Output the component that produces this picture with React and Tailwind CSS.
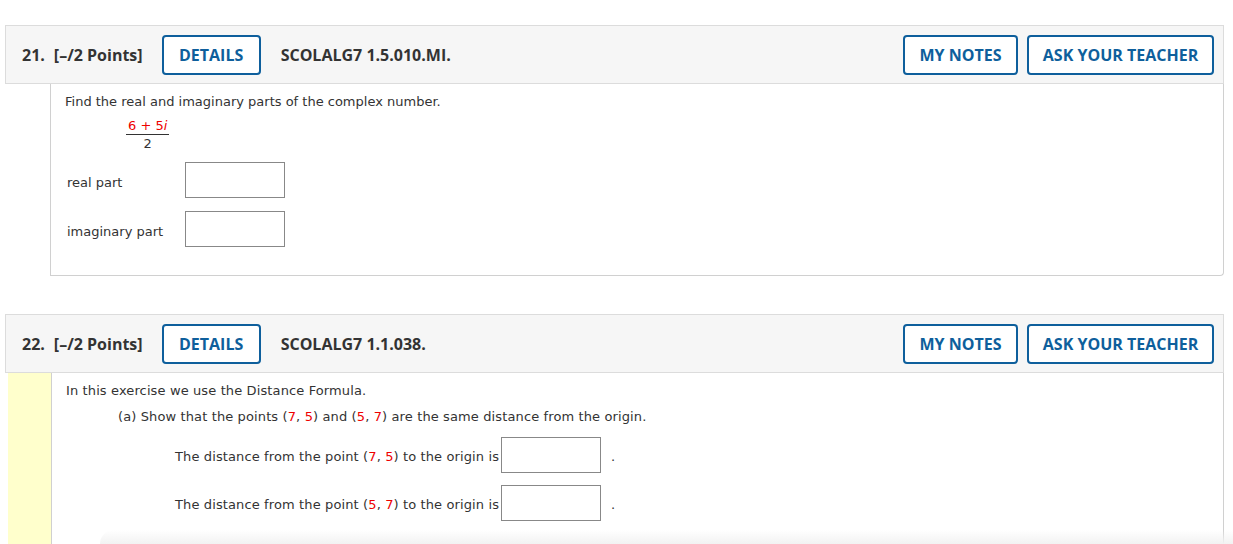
import React from 'react';

const head = "font-['Open_Sans',sans-serif]";
const body = "font-['DejaVu_Sans','Verdana',sans-serif]";

const OutlineButton = ({ children, className = '' }) => (
    <button
        className={`h-[40px] rounded-[4px] border-2 border-[#0e5f9c] bg-white text-[16px] font-bold text-[#0e5f9c] ${className}`}
    >
        {children}
    </button>
);

const QuestionHeader = ({ num, code }) => (
    <div className={`flex h-[59px] items-center border border-[#dcdcdc] bg-[#f6f6f6] pl-[16px] pr-[9px] ${head}`}>
        <span className="text-[16px] font-bold text-[#333]">{num}.</span>
        <span className="ml-[9px] text-[16px] font-bold text-[#333]">[–/2 Points]</span>
        <OutlineButton className="ml-[19px] w-[99px]">DETAILS</OutlineButton>
        <span className="ml-[20px] text-[16px] font-bold text-[#333]">{code}</span>
        <div className="ml-auto flex gap-[9px]">
            <OutlineButton className="w-[115px]">MY NOTES</OutlineButton>
            <OutlineButton className="w-[187px]">ASK YOUR TEACHER</OutlineButton>
        </div>
    </div>
);

const Blank = () => <span className="inline-block h-[36px] w-[100px] border border-[#888] bg-white align-middle" />;

const Red = ({ children }) => <span className="text-[#e00]">{children}</span>;

export default function App() {
    return (
        <div className={`relative h-[544px] overflow-hidden bg-white pt-[25px] pl-[5px] pr-[9px] text-[13px] text-[#333] ${body}`}>
            {/* question 21 */}
            <QuestionHeader num="21" code="SCOLALG7 1.5.010.MI." />
            <div className="ml-[45px] h-[192px] rounded-br-[4px] border-x border-b border-t-0 border-[#d0d0d0] pl-[14px] pt-[10px]">
                <p className="leading-[16px]">Find the real and imaginary parts of the complex number.</p>
                <div className="ml-[61px] mt-[8px] inline-flex flex-col items-center text-[13px] leading-[15px]">
                    <span className="border-b border-[#333] px-[2px] pb-[1px] text-[#e00]">
                        6 + 5<i>i</i>
                    </span>
                    <span className="pt-[1px]">2</span>
                </div>
                <div className="mt-[11px] flex items-center">
                    <span className="w-[120px] pl-[2px] pt-[5px]">real part</span>
                    <Blank />
                </div>
                <div className="mt-[13px] flex items-center">
                    <span className="w-[120px] pl-[2px] pt-[5px]">imaginary part</span>
                    <Blank />
                </div>
            </div>

            {/* question 22 */}
            <div className="mt-[38px]">
                <QuestionHeader num="22" code="SCOLALG7 1.1.038." />
                <div className="flex h-[200px]">
                    <div className="ml-[3px] w-[43px] bg-[#ffffcc]" />
                    <div className="flex-1 border-l border-r border-[#d0d0d0] pl-[14px] pt-[10px] tracking-[0.12px]">
                        <p className="leading-[16px]">In this exercise we use the Distance Formula.</p>
                        <p className="mt-[10px] ml-[52px] leading-[16px]">
                            (a) Show that the points (<Red>7</Red>, <Red>5</Red>) and (<Red>5</Red>, <Red>7</Red>) are the same distance from the origin.
                        </p>
                        <div className="mt-[12px] ml-[109px] flex items-center">
                            <span className="pt-[4px]">
                                The distance from the point (<Red>7</Red>, <Red>5</Red>) to the origin is
                            </span>
                            <span className="ml-[2px]"><Blank /></span>
                            <span className="ml-[10px] pt-[4px]">.</span>
                        </div>
                        <div className="mt-[12px] ml-[109px] flex items-center">
                            <span className="pt-[4px]">
                                The distance from the point (<Red>5</Red>, <Red>7</Red>) to the origin is
                            </span>
                            <span className="ml-[2px]"><Blank /></span>
                            <span className="ml-[10px] pt-[4px]">.</span>
                        </div>
                    </div>
                </div>
            </div>

            <div className="pointer-events-none absolute bottom-0 left-[100px] right-0 h-[14px] rounded-tl-[80px] bg-gradient-to-b from-transparent to-[#f2f2f2]" />
        </div>
    );
}
